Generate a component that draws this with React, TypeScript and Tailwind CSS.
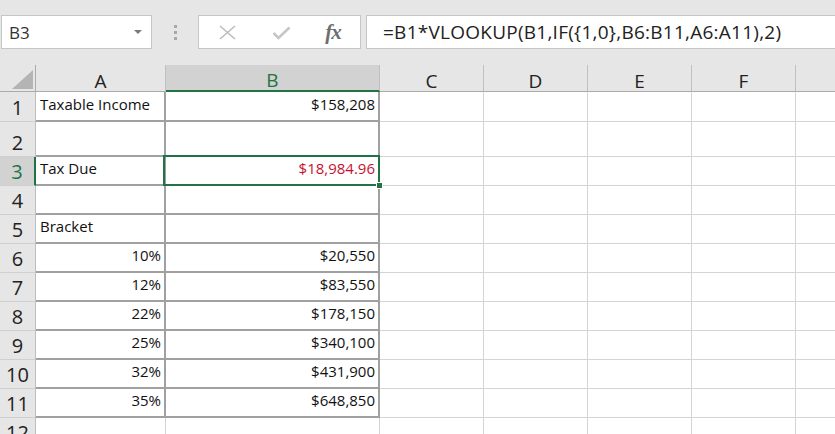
import React from "react";

type Cell = { text?: string; align?: "left" | "right"; red?: boolean };

const rowHeights = [30, 35, 29, 29, 29, 29, 29, 29, 29, 29, 29, 29];

const data: Record<number, [Cell, Cell]> = {
  1: [{ text: "Taxable Income" }, { text: "$158,208", align: "right" }],
  2: [{}, {}],
  3: [{ text: "Tax Due" }, { text: "$18,984.96", align: "right", red: true }],
  4: [{}, {}],
  5: [{ text: "Bracket" }, {}],
  6: [{ text: "10%", align: "right" }, { text: "$20,550", align: "right" }],
  7: [{ text: "12%", align: "right" }, { text: "$83,550", align: "right" }],
  8: [{ text: "22%", align: "right" }, { text: "$178,150", align: "right" }],
  9: [{ text: "25%", align: "right" }, { text: "$340,100", align: "right" }],
  10: [{ text: "32%", align: "right" }, { text: "$431,900", align: "right" }],
  11: [{ text: "35%", align: "right" }, { text: "$648,850", align: "right" }],
};

function Toolbar() {
  return (
    <div className="h-[65px] bg-[#e6e6e6] flex items-start pt-[15px] pl-[1px]">
      <div className="w-[151px] h-[34px] bg-white border border-[#c6c6c6] flex items-center pl-[7px] pr-[9px]">
        <span className="flex-1 text-[17px] text-[#333] leading-none font-['Open_Sans',sans-serif]">B3</span>
        <svg width="8" height="5" viewBox="0 0 8 5">
          <path d="M0 0 L8 0 L4 4 Z" fill="#7a7a7a" />
        </svg>
      </div>
      <div className="w-[46px] h-[34px] flex flex-col items-center justify-center gap-[3px] pl-[1px]">
        <div className="w-[3px] h-[3px] bg-[#a8a8a8]" />
        <div className="w-[3px] h-[3px] bg-[#a8a8a8]" />
        <div className="w-[3px] h-[3px] bg-[#a8a8a8]" />
      </div>
      <div className="w-[163px] h-[34px] bg-white border border-[#c6c6c6] flex items-center">
        <div className="w-[56px] flex justify-center pl-[1px]">
          <svg width="17" height="15" viewBox="0 0 17 15">
            <path d="M1 1 L16 14 M16 1 L1 14" stroke="#bdbdbd" strokeWidth="1.6" fill="none" />
          </svg>
        </div>
        <div className="w-[52px] flex justify-center pt-[2px]">
          <svg width="19" height="14" viewBox="0 0 19 14">
            <path d="M1.5 7 L6.5 12 L17.5 1.5" stroke="#c6c6c6" strokeWidth="2.6" fill="none" />
          </svg>
        </div>
        <div className="w-[52px] flex justify-center">
          <span className="text-[21px] italic text-[#6e6e6e] font-['Liberation_Serif',serif] leading-none font-semibold tracking-[-1px]">
            fx
          </span>
        </div>
      </div>
      <div className="flex-1 ml-[5px] h-[34px] bg-white border-y border-l border-[#c6c6c6] flex items-center pl-[16px]">
        <span className="text-[19px] tracking-[0.25px] text-[#222] font-['Open_Sans',sans-serif] leading-none">
          =B1*VLOOKUP(B1,IF({"{"}1,0{"}"},B6:B11,A6:A11),2)
        </span>
      </div>
    </div>
  );
}

function HeaderRow() {
  const cols = ["C", "D", "E", "F"];
  return (
    <div className="flex h-[27px] bg-[#e6e6e6] font-['Open_Sans',sans-serif] text-[19px] leading-[20px] text-[#222]">
      <div className="w-[36px] border-r border-b border-[#ababab] flex items-end justify-end pr-[2px] pb-[2px]">
        <svg width="21" height="19" viewBox="0 0 21 19">
          <path d="M21 0 L21 19 L0 19 Z" fill="#b4b4b4" />
        </svg>
      </div>
      <div className="w-[130px] border-r border-b border-r-[#c0c0c0] border-b-[#ababab] flex items-end justify-center">A</div>
      <div className="w-[214px] bg-[#d2d2d2] border-r border-r-[#c0c0c0] border-b-2 border-b-[#217346] flex items-end justify-center text-[#217346]">
        B
      </div>
      {cols.map((c) => (
        <div key={c} className="w-[104px] border-r border-b border-r-[#c0c0c0] border-b-[#ababab] flex items-end justify-center">
          {c}
        </div>
      ))}
      <div className="flex-1 border-b border-[#ababab]" />
    </div>
  );
}

function DataCell({ cell, w, thick }: { cell: Cell; w: string; thick: boolean }) {
  return (
    <div
      className={`${w} bg-white flex items-end px-[3px] pb-[6px] whitespace-nowrap ${
        thick ? "border-r-2 border-b-2 border-[#a0a0a0]" : "border-r border-b border-[#d4d4d4]"
      } ${cell.align === "right" ? "justify-end" : "justify-start pl-[4px]"} ${cell.red ? "text-[#c8102e]" : "text-[#111]"}`}
    >
      {cell.text}
    </div>
  );
}

function Row({ n, h }: { n: number; h: number }) {
  const sel = n === 3;
  const cells = data[n];
  const thick = n <= 11;
  return (
    <div className="flex font-['Open_Sans',sans-serif] text-[15px] leading-[20px]" style={{ height: h }}>
      <div
        className={`w-[36px] flex items-end justify-center pb-[2px] text-[20px] leading-[22px] border-b border-[#cfcfcf] ${
          sel ? "bg-[#d2d2d2] text-[#217346] border-r-2 border-r-[#217346]" : "bg-[#e6e6e6] text-[#222] border-r border-r-[#bdbdbd]"
        }`}
      >
        {n}
      </div>
      {cells ? (
        <>
          <DataCell cell={cells[0]} w="w-[130px]" thick={thick} />
          {sel ? (
            <div className="relative w-[214px] bg-white flex items-end justify-end px-[3px] pb-[6px] border-r-2 border-b-2 border-[#a0a0a0] text-[#c8102e]">
              {cells[1].text}
              <div className="absolute left-[-3px] top-[-2px] right-[-2px] bottom-[-2px] border-2 border-[#217346]" />
              <div className="absolute right-[-5px] bottom-[-5px] w-[7px] h-[7px] bg-[#217346] border border-white" />
            </div>
          ) : (
            <DataCell cell={cells[1]} w="w-[214px]" thick={thick} />
          )}
        </>
      ) : (
        <>
          <div className="w-[130px] bg-white border-r border-b border-[#d4d4d4]" />
          <div className="w-[214px] bg-white border-r border-b border-[#d4d4d4]" />
        </>
      )}
      <div className="w-[104px] bg-white border-r border-b border-[#d4d4d4]" />
      <div className="w-[104px] bg-white border-r border-b border-[#d4d4d4]" />
      <div className="w-[104px] bg-white border-r border-b border-[#d4d4d4]" />
      <div className="w-[104px] bg-white border-r border-b border-[#d4d4d4]" />
      <div className="flex-1 bg-white border-b border-[#d4d4d4]" />
    </div>
  );
}

export default function App() {
  return (
    <div className="w-[835px] h-[434px] overflow-hidden bg-white">
      <Toolbar />
      <HeaderRow />
      {rowHeights.map((h, i) => (
        <Row key={i} n={i + 1} h={h} />
      ))}
    </div>
  );
}
